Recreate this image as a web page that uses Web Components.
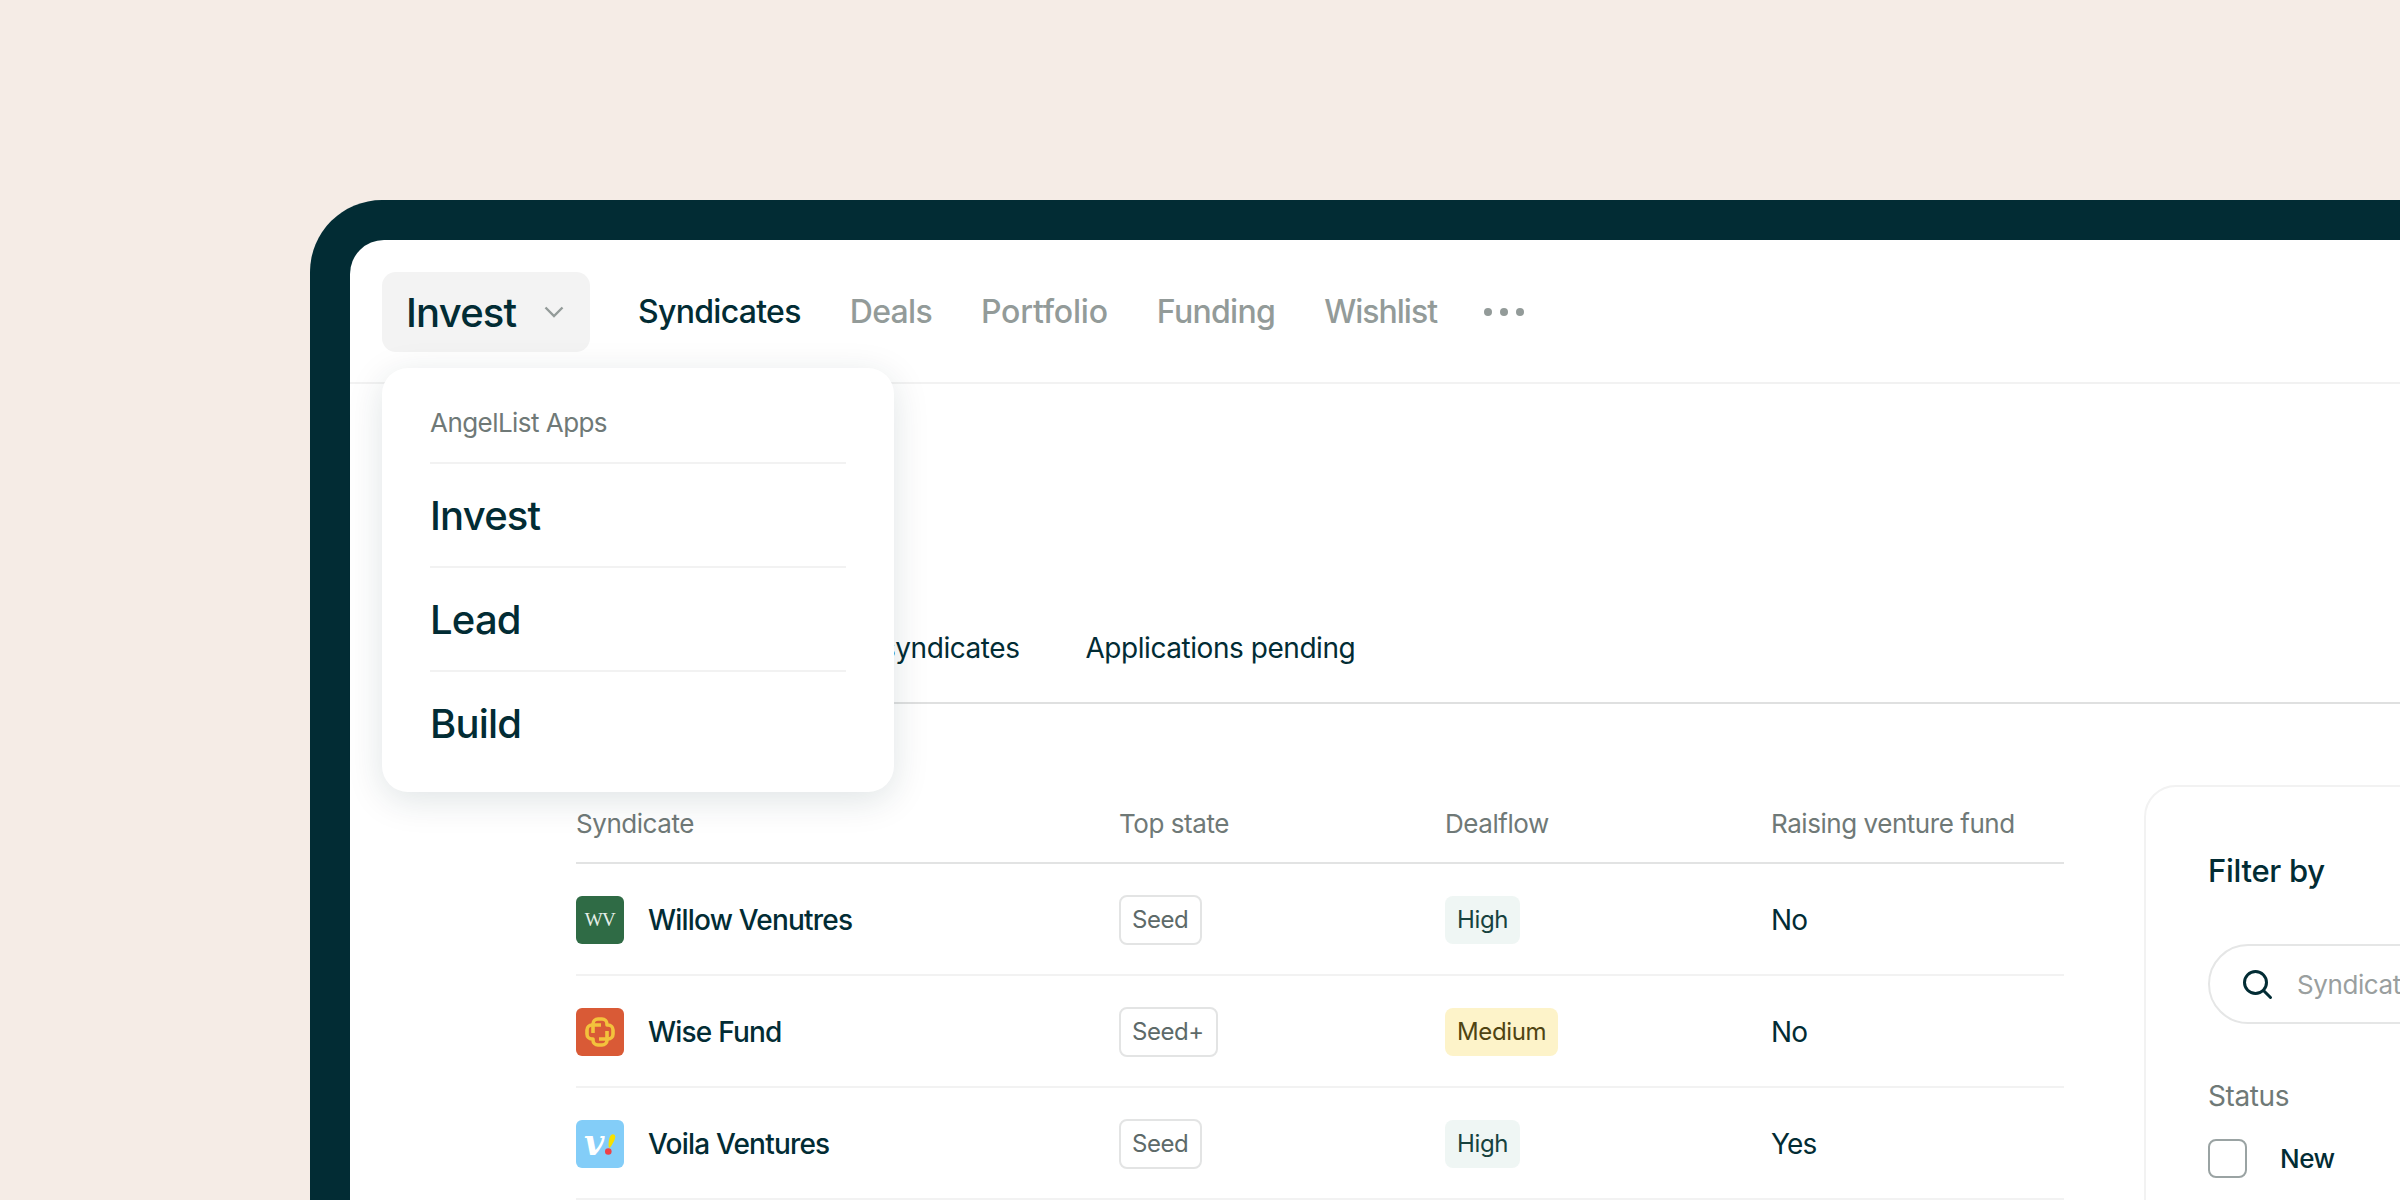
<!DOCTYPE html>
<html>
<head>
<meta charset="utf-8">
<title>Invest</title>
<style>
    html, body { margin: 0; height: 100%; overflow: hidden; background: #f5ece6; }
    body { font-family: Inter, "Liberation Sans", sans-serif; color: #022c34; }
</style>
</head>
<body>
<app-frame>
    <nav-bar slot="nav">
        <app-switcher>Invest</app-switcher>
        <nav-link active>Syndicates</nav-link>
        <nav-link>Deals</nav-link>
        <nav-link style="letter-spacing:-.2px">Portfolio</nav-link>
        <nav-link>Funding</nav-link>
        <nav-link style="letter-spacing:-1px">Wishlist</nav-link>
        <more-dots></more-dots>
    </nav-bar>
    <tab-bar>
        <span style="margin-right:-3px">Recommended</span>
        <span>My syndicates</span>
        <span>Applications pending</span>
    </tab-bar>
    <content-row>
        <syndicate-table>
            <syndicate-row name="Willow Venutres" stage="Seed" flow="High" raising="No">
                <wv-logo slot="logo"></wv-logo>
            </syndicate-row>
            <syndicate-row name="Wise Fund" stage="Seed+" flow="Medium" raising="No">
                <wise-logo slot="logo"></wise-logo>
            </syndicate-row>
            <syndicate-row name="Voila Ventures" stage="Seed" flow="High" raising="Yes">
                <voila-logo slot="logo"></voila-logo>
            </syndicate-row>
        </syndicate-table>
        <filter-panel></filter-panel>
    </content-row>
</app-frame>

<script>
// ── helper: every element is a template cloned in an open shadow root ──
function shadow(el, html) {
    const template = document.createElement('template');
    template.innerHTML = html;
    el.attachShadow({ mode: 'open' }).appendChild(template.content.cloneNode(true));
}

// ── device frame ──
class AppFrame extends HTMLElement {
    constructor() {
        super();
        shadow(this, `
            <style>
                :host {
                    display: block;
                    box-sizing: border-box;
                    width: 2400px;
                    height: 1000px;
                    margin: 200px 0 0 310px;
                    padding: 40px 0 0 40px;
                    background: #022c34;
                    border-top-left-radius: 72px;
                }
                .screen {
                    height: 100%;
                    background: #fff;
                    border-top-left-radius: 34px;
                }
                .main { padding-left: 226px; }
            </style>
            <div class="screen">
                <slot name="nav"></slot>
                <div class="main"><slot></slot></div>
            </div>
        `);
    }
}

// ── top navigation ──
class NavBar extends HTMLElement {
    constructor() {
        super();
        shadow(this, `
            <style>
                :host {
                    display: flex;
                    align-items: center;
                    gap: 49px;
                    padding: 32px 0 30px 32px;
                    height: 80px;
                    border-bottom: 2px solid #f2f2f2;
                    position: relative;
                }
            </style>
            <slot></slot>
        `);
    }
}

class NavLink extends HTMLElement {
    constructor() {
        super();
        shadow(this, `
            <style>
                :host {
                    display: block;
                    font-size: 32px;
                    line-height: 40px;
                    font-weight: 500;
                    letter-spacing: -.7px;
                    color: #939b99;
                }
                :host([active]) { color: #022c34; }
            </style>
            <slot></slot>
        `);
    }
}

class MoreDots extends HTMLElement {
    constructor() {
        super();
        shadow(this, `
            <style>
                :host { display: flex; gap: 8px; margin-left: -2px; }
                i { width: 8px; height: 8px; border-radius: 50%; background: #939b99; }
            </style>
            <i></i><i></i><i></i>
        `);
    }
}

// ── "Invest" pill plus the open menu lying over the page ──
class AppSwitcher extends HTMLElement {
    constructor() {
        super();
        shadow(this, `
            <style>
                :host { display: block; margin-right: -1px; }
                .pill {
                    display: flex;
                    align-items: center;
                    box-sizing: border-box;
                    width: 208px;
                    height: 80px;
                    padding-left: 24px;
                    background: #f3f3f3;
                    border-radius: 14px;
                    font-size: 40px;
                    font-weight: 500;
                    letter-spacing: -.8px;
                }
                svg { margin-left: 28px; }
                .menu {
                    position: absolute;
                    z-index: 5;
                    left: 32px;
                    top: 128px;
                    box-sizing: border-box;
                    width: 512px;
                    height: 424px;
                    padding: 0 48px;
                    background: #fff;
                    border-radius: 26px;
                    box-shadow: 0 8px 36px rgba(2, 44, 52, .13);
                }
                .head {
                    box-sizing: border-box;
                    height: 96px;
                    padding-top: 37px;
                    line-height: 36px;
                    font-size: 26px;
                    letter-spacing: -.55px;
                    color: #6f7977;
                    border-bottom: 2px solid #f2f2f2;
                }
                .item {
                    height: 102px;
                    line-height: 104px;
                    font-size: 40px;
                    font-weight: 500;
                    letter-spacing: -.8px;
                    border-bottom: 2px solid #f2f2f2;
                }
                .item:last-child { border-bottom: 0; }
            </style>
            <div class="pill">
                <span><slot></slot></span>
                <svg width="20" height="12" viewBox="0 0 20 12" fill="none" stroke="#939b99" stroke-width="2.4"><path d="M1.5 1.5l8.5 8.5 8.5-8.5"/></svg>
            </div>
            <div class="menu">
                <div class="head">AngelList Apps</div>
                <div class="item">Invest</div>
                <div class="item">Lead</div>
                <div class="item">Build</div>
            </div>
        `);
    }
}

// ── tabs ──
class TabBar extends HTMLElement {
    constructor() {
        super();
        shadow(this, `
            <style>
                :host {
                    display: flex;
                    gap: 66px;
                    align-items: center;
                    height: 108px;
                    margin-top: 210px;
                    border-bottom: 2px solid #dfe0e0;
                    font-size: 28px;
                    letter-spacing: -.45px;
                    line-height: 36px;
                    color: #022c34;
                }
            </style>
            <slot></slot>
        `);
    }
}

class ContentRow extends HTMLElement {
    constructor() {
        super();
        shadow(this, `
            <style>
                :host {
                    display: flex;
                    align-items: flex-start;
                    gap: 80px;
                    margin-top: 81px;
                }
            </style>
            <slot></slot>
        `);
    }
}

// ── table ──
class SyndicateTable extends HTMLElement {
    constructor() {
        super();
        shadow(this, `
            <style>
                :host { display: block; flex: none; width: 1488px; }
                .head {
                    display: grid;
                    grid-template-columns: 543px 326px 326px 293px;
                    align-items: center;
                    height: 76px;
                    padding-bottom: 1px;
                    border-bottom: 2px solid #e2e3e3;
                    font-size: 26px;
                    letter-spacing: -.45px;
                    color: #6f7977;
                }
            </style>
            <div class="head">
                <span>Syndicate</span>
                <span>Top state</span>
                <span>Dealflow</span>
                <span>Raising venture fund</span>
            </div>
            <slot></slot>
        `);
    }
}

class SyndicateRow extends HTMLElement {
    constructor() {
        super();
        shadow(this, `
            <style>
                :host {
                    display: grid;
                    grid-template-columns: 543px 326px 326px 293px;
                    align-items: center;
                    box-sizing: border-box;
                    height: 112px;
                    padding-top: 2px;
                    border-bottom: 2px solid #f2f2f2;
                    font-size: 28px;
                    letter-spacing: -.8px;
                }
                .name { display: flex; align-items: center; gap: 24px; font-weight: 500; }
                .cell { display: flex; }
            </style>
            <div class="name"><slot name="logo"></slot><span id="name"></span></div>
            <div class="cell"><stage-tag id="stage"></stage-tag></div>
            <div class="cell"><flow-tag id="flow"></flow-tag></div>
            <div id="raising"></div>
        `);
        this.shadowRoot.querySelector('#name').textContent = this.getAttribute('name');
        this.shadowRoot.querySelector('#stage').textContent = this.getAttribute('stage');
        const flow = this.shadowRoot.querySelector('#flow');
        flow.textContent = this.getAttribute('flow');
        flow.setAttribute('level', this.getAttribute('flow').toLowerCase());
        this.shadowRoot.querySelector('#raising').textContent = this.getAttribute('raising');
    }
}

class StageTag extends HTMLElement {
    constructor() {
        super();
        shadow(this, `
            <style>
                :host {
                    display: block;
                    box-sizing: border-box;
                    height: 50px;
                    padding: 0 12px 0 11px;
                    line-height: 46px;
                    border: 2px solid #e3e4e4;
                    border-radius: 8px;
                    font-size: 24px;
                    letter-spacing: -.45px;
                    color: #5d6a69;
                }
            </style>
            <slot></slot>
        `);
    }
}

class FlowTag extends HTMLElement {
    constructor() {
        super();
        shadow(this, `
            <style>
                :host {
                    display: block;
                    height: 48px;
                    padding: 0 12px;
                    line-height: 48px;
                    border-radius: 8px;
                    font-size: 24px;
                    letter-spacing: -.35px;
                    background: #eff6f4;
                    color: #17423f;
                }
                :host([level="medium"]) { background: #fdf3c9; color: #4f4412; }
            </style>
            <slot></slot>
        `);
    }
}

// ── logos ──
class WvLogo extends HTMLElement {
    constructor() {
        super();
        shadow(this, `
            <style>
                :host {
                    display: flex;
                    align-items: center;
                    justify-content: center;
                    flex: none;
                    width: 48px;
                    height: 48px;
                    border-radius: 6px;
                    background: #2f6b45;
                    color: #e6efe8;
                    font: 400 19px "Liberation Serif", serif;
                    letter-spacing: -.5px;
                }
            </style>
            WV
        `);
    }
}

class WiseLogo extends HTMLElement {
    constructor() {
        super();
        shadow(this, `
            <style>
                :host { display: block; flex: none; width: 48px; height: 48px; }
                svg { display: block; }
            </style>
            <svg width="48" height="48" viewBox="0 0 48 48">
                <rect width="48" height="48" rx="6" fill="#d95a36"/>
                <g fill="none" stroke="#f3c23c" stroke-width="3.6" stroke-linejoin="round">
                    <path d="M17 25V16a5 5 0 0 1 5-5h4a5 5 0 0 1 5 5v1h1a5 5 0 0 1 5 5v4a5 5 0 0 1-5 5h-9"/>
                    <path d="M31 23v9a5 5 0 0 1-5 5h-4a5 5 0 0 1-5-5v-1h-1a5 5 0 0 1-5-5v-4a5 5 0 0 1 5-5h9"/>
                </g>
            </svg>
        `);
    }
}

class VoilaLogo extends HTMLElement {
    constructor() {
        super();
        shadow(this, `
            <style>
                :host {
                    display: block;
                    flex: none;
                    position: relative;
                    width: 48px;
                    height: 48px;
                    border-radius: 6px;
                    background: #83cdf8;
                    overflow: hidden;
                }
                span {
                    position: absolute;
                    left: 8px;
                    top: 4px;
                    font: italic 700 35px/38px "DejaVu Serif", serif;
                    color: #fff;
                }
                svg { position: absolute; left: 0; top: 0; }
            </style>
            <span>v</span>
            <svg width="48" height="48" viewBox="0 0 48 48">
                <path d="M35 15c1.8-1.8 4.6-.6 4.3 2-.4 3.4-3 7.5-5 10.3-.5.7-1.5.4-1.6-.5-.3-3.3 0-8.9 2.3-11.8z" fill="#f8e100"/>
                <circle cx="32.3" cy="31.5" r="3.3" fill="#ee4146"/>
            </svg>
        `);
    }
}

// ── filter panel on the right ──
class FilterPanel extends HTMLElement {
    constructor() {
        super();
        shadow(this, `
            <style>
                :host {
                    display: block;
                    flex: none;
                    box-sizing: border-box;
                    width: 520px;
                    height: 600px;
                    padding: 0 62px;
                    border: 2px solid #f2f2f2;
                    border-radius: 32px;
                }
                h2 {
                    margin: 65px 0 0;
                    font-size: 31px;
                    line-height: 38px;
                    font-weight: 500;
                    letter-spacing: -.3px;
                }
                .search {
                    display: flex;
                    align-items: center;
                    box-sizing: border-box;
                    height: 80px;
                    margin-top: 54px;
                    padding-left: 31px;
                    border: 2px solid #e5e6e6;
                    border-radius: 40px;
                    font-size: 26px;
                    letter-spacing: -.4px;
                    color: #9a9f9f;
                    white-space: nowrap;
                }
                .search svg { margin-right: 24px; flex: none; }
                .label {
                    margin-top: 55px;
                    font-size: 28px;
                    line-height: 34px;
                    letter-spacing: -.4px;
                    color: #6f7977;
                }
                .check {
                    display: flex;
                    align-items: center;
                    gap: 33px;
                    margin-top: 26px;
                    font-size: 26px;
                    letter-spacing: -.5px;
                    font-weight: 500;
                }
                .box {
                    box-sizing: border-box;
                    width: 39px;
                    height: 39px;
                    border: 2px solid #9aa3a3;
                    border-radius: 8px;
                }
            </style>
            <h2>Filter by</h2>
            <div class="search">
                <svg width="32" height="32" viewBox="0 0 32 32" fill="none" stroke="#022c34" stroke-width="3" stroke-linecap="round"><circle cx="14.5" cy="14.5" r="11"/><path d="M22.5 22.5l7 7"/></svg>
                Syndicate name
            </div>
            <div class="label">Status</div>
            <div class="check"><span class="box"></span>New</div>
        `);
    }
}

customElements.define('app-frame', AppFrame);
customElements.define('nav-bar', NavBar);
customElements.define('nav-link', NavLink);
customElements.define('more-dots', MoreDots);
customElements.define('app-switcher', AppSwitcher);
customElements.define('tab-bar', TabBar);
customElements.define('content-row', ContentRow);
customElements.define('syndicate-table', SyndicateTable);
customElements.define('syndicate-row', SyndicateRow);
customElements.define('stage-tag', StageTag);
customElements.define('flow-tag', FlowTag);
customElements.define('wv-logo', WvLogo);
customElements.define('wise-logo', WiseLogo);
customElements.define('voila-logo', VoilaLogo);
customElements.define('filter-panel', FilterPanel);
</script>
</body>
</html>
